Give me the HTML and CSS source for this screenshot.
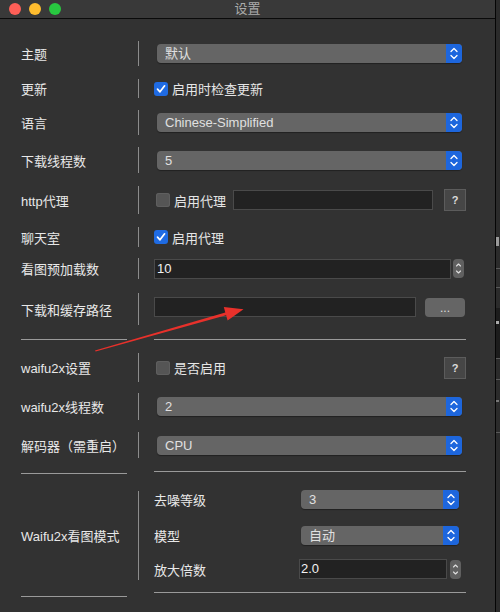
FILE: index.html
```html
<!DOCTYPE html>
<html lang="zh-CN">
<head>
<meta charset="utf-8">
<title>设置</title>
<link rel="stylesheet" href="styles.css">
</head>
<body>
<div class="desktop">
  <div class="window">
    <div class="titlebar">
      <div class="lights">
        <span class="light red"></span>
        <span class="light yellow"></span>
        <span class="light green"></span>
      </div>
      <div class="title">设置</div>
      <div></div>
    </div>

    <div class="content">
      <div class="row r1">
        <div class="label">主题</div><div class="vline"></div>
        <div class="field"><div class="combo"><span class="ctext">默认</span><span class="cbtn"><svg viewBox="0 0 16 19"><path d="M5 7.5 8 4.5 11 7.5M5 11.5 8 14.5 11 11.5"/></svg></span></div></div>
      </div>
      <div class="row r2">
        <div class="label">更新</div><div class="vline"></div>
        <div class="field"><label class="check"><span class="box on"><svg viewBox="0 0 14 14"><path d="M3.5 7.2 6 9.8 10.6 3.8"/></svg></span>启用时检查更新</label></div>
      </div>
      <div class="row r3">
        <div class="label">语言</div><div class="vline"></div>
        <div class="field"><div class="combo"><span class="ctext">Chinese-Simplified</span><span class="cbtn"><svg viewBox="0 0 16 19"><path d="M5 7.5 8 4.5 11 7.5M5 11.5 8 14.5 11 11.5"/></svg></span></div></div>
      </div>
      <div class="row r4">
        <div class="label">下载线程数</div><div class="vline"></div>
        <div class="field"><div class="combo"><span class="ctext">5</span><span class="cbtn"><svg viewBox="0 0 16 19"><path d="M5 7.5 8 4.5 11 7.5M5 11.5 8 14.5 11 11.5"/></svg></span></div></div>
      </div>
      <div class="row r5">
        <div class="label">http代理</div><div class="vline"></div>
        <div class="field">
          <label class="check off-pad"><span class="box"></span>启用代理</label>
          <div class="edit proxy"></div>
          <div class="qbtn">?</div>
        </div>
      </div>
      <div class="row r6">
        <div class="label">聊天室</div><div class="vline"></div>
        <div class="field"><label class="check"><span class="box on"><svg viewBox="0 0 14 14"><path d="M3.5 7.2 6 9.8 10.6 3.8"/></svg></span>启用代理</label></div>
      </div>
      <div class="row r7">
        <div class="label">看图预加载数</div><div class="vline"></div>
        <div class="field">
          <div class="edit spin">10</div>
          <div class="stepper"><svg viewBox="0 0 11 19"><path d="M3.5 7 5.5 5 7.5 7M3.5 12 5.5 14 7.5 12"/></svg></div>
        </div>
      </div>
      <div class="row r8">
        <div class="label">下载和缓存路径</div><div class="vline"></div>
        <div class="field raise">
          <div class="edit path"></div>
          <div class="dots">...</div>
        </div>
      </div>

      <div class="sep s1"><div class="hline"></div><div class="hline"></div></div>

      <div class="row r9">
        <div class="label">waifu2x设置</div><div class="vline"></div>
        <div class="field">
          <label class="check off-pad"><span class="box"></span>是否启用</label>
          <div class="qbtn push">?</div>
        </div>
      </div>
      <div class="row r10">
        <div class="label">waifu2x线程数</div><div class="vline"></div>
        <div class="field"><div class="combo"><span class="ctext">2</span><span class="cbtn"><svg viewBox="0 0 16 19"><path d="M5 7.5 8 4.5 11 7.5M5 11.5 8 14.5 11 11.5"/></svg></span></div></div>
      </div>
      <div class="row r11">
        <div class="label">解码器（需重启）</div><div class="vline"></div>
        <div class="field"><div class="combo"><span class="ctext">CPU</span><span class="cbtn"><svg viewBox="0 0 16 19"><path d="M5 7.5 8 4.5 11 7.5M5 11.5 8 14.5 11 11.5"/></svg></span></div></div>
      </div>

      <div class="sep s2"><div class="hline low"></div><div class="hline"></div></div>

      <div class="row group">
        <div class="label">Waifu2x看图模式</div><div class="vline"></div>
        <div class="subform">
          <div class="subrow">
            <div class="sublabel">去噪等级</div>
            <div class="combo sub"><span class="ctext">3</span><span class="cbtn"><svg viewBox="0 0 16 19"><path d="M5 7.5 8 4.5 11 7.5M5 11.5 8 14.5 11 11.5"/></svg></span></div>
          </div>
          <div class="subrow gap2">
            <div class="sublabel">模型</div>
            <div class="combo sub"><span class="ctext">自动</span><span class="cbtn"><svg viewBox="0 0 16 19"><path d="M5 7.5 8 4.5 11 7.5M5 11.5 8 14.5 11 11.5"/></svg></span></div>
          </div>
          <div class="subrow gap3">
            <div class="sublabel">放大倍数</div>
            <div class="subspin">
              <div class="edit spin scale">2.0</div>
              <div class="stepper"><svg viewBox="0 0 11 19"><path d="M3.5 7 5.5 5 7.5 7M3.5 12 5.5 14 7.5 12"/></svg></div>
            </div>
          </div>
        </div>
      </div>

      <div class="sep s3"><div class="hline low4"></div><div class="hline"></div></div>
    </div>
  </div>

  <div class="behind">
    <div class="mark m1"></div>
    <div class="tick t1"></div>
    <div class="tick t2"></div>
    <div class="darkband"><div class="dot"></div></div>
    <div class="tick t3"></div>
    <div class="tick t4"></div>
    <div class="mark m2"></div>
    <div class="tick t5"></div>
  </div>

  <svg class="arrow" viewBox="0 0 500 612" width="500" height="612">
    <polygon points="95,350.6 225.3,312.4 223.8,307.1 243.5,309.2 227.6,320.5 226.1,315.2 95.6,351.6" fill="#e8312b"/>
  </svg>
</div>
</body>
</html>
```

FILE: styles.css
```css
* { box-sizing: border-box; margin: 0; padding: 0; }

html, body {
  width: 500px;
  height: 612px;
  overflow: hidden;
  background: #2a2a2a;
}

body {
  font-family: "Liberation Sans", "Noto Sans CJK SC", sans-serif;
  font-size: 13px;
  color: #e6e6e6;
}

.desktop {
  position: relative;
  display: flex;
  width: 500px;
  height: 612px;
}

.window {
  width: 496px;
  height: 612px;
  flex: none;
  background: #323232;
  border-right: 1px solid #050505;
  display: flex;
  flex-direction: column;
}

/* title bar */
.titlebar {
  height: 19px;
  flex: none;
  background: #393939;
  border-bottom: 1px solid #0a0a0a;
  display: grid;
  grid-template-columns: 1fr auto 1fr;
  align-items: center;
}

.lights {
  display: flex;
  gap: 8px;
  padding-left: 9px;
}

.light {
  width: 12px;
  height: 12px;
  border-radius: 50%;
}
.red { background: #fe5f57; }
.yellow { background: #febc2e; }
.green { background: #28c840; }

.title {
  color: #ababab;
  font-size: 13px;
  line-height: 18px;
}

/* form */
.content {
  padding: 22px 29px 0 21px;
  display: flex;
  flex-direction: column;
}

.row {
  display: grid;
  grid-template-columns: 117px 1px 1fr;
  align-items: center;
}

.label {
  white-space: nowrap;
  color: #e8e8e8;
}

.vline {
  align-self: stretch;
  background: #8c8c8c;
}

.field {
  padding-left: 15px;
  display: flex;
  align-items: center;
  min-width: 0;
}

.r1 { height: 25px; }
.r2 { height: 18px; margin-top: 13px; }
.r3 { height: 25px; margin-top: 13px; }
.r4 { height: 26px; margin-top: 12px; }
.r5 { height: 28px; margin-top: 13px; }
.r6 { height: 20px; margin-top: 13px; }
.r7 { height: 21px; margin-top: 11px; }
.r8 { height: 32px; margin-top: 14px; }
.r9 { height: 29px; margin-top: 13px; }
.r10 { height: 27px; margin-top: 11px; }
.r11 { height: 26px; margin-top: 12px; }
.group { height: 89px; margin-top: 17px; }

.raise { margin-bottom: 4px; }

/* separators */
.sep {
  display: grid;
  grid-template-columns: 106px 1fr;
  column-gap: 27px;
  align-items: start;
}
.s1 { margin-top: 14px; }
.s2 { margin-top: 13px; }
.s3 { margin-top: 12px; }

.hline {
  height: 1px;
  background: #9a9a9a;
}
.hline.low { margin-top: 2px; }
.hline.low4 { margin-top: 4px; }

/* combo box */
.combo {
  flex: 1;
  display: flex;
  height: 19px;
  margin: 0 4px 0 3px;
  border-radius: 4px;
  background: #656565;
  box-shadow: 0 1px 1px rgba(0, 0, 0, 0.35);
  overflow: hidden;
}

.ctext {
  flex: 1;
  padding-left: 8px;
  line-height: 19px;
  color: #e0e0e0;
  white-space: nowrap;
}

.cbtn {
  width: 16px;
  flex: none;
  background: #1d66dd;
  display: flex;
}

.cbtn svg {
  width: 16px;
  height: 19px;
}

.cbtn path {
  fill: none;
  stroke: #ffffff;
  stroke-width: 1.3;
  stroke-linecap: round;
  stroke-linejoin: round;
}

/* checkbox */
.check {
  display: flex;
  align-items: center;
  gap: 4px;
  color: #e6e6e6;
  white-space: nowrap;
}

.check.off-pad { margin-left: 2px; }

.box {
  width: 14px;
  height: 14px;
  border-radius: 3px;
  background: #555555;
  box-shadow: inset 0 0 0 1px #5f5f5f;
  display: flex;
}

.box.on {
  background: #1f6be3;
  box-shadow: none;
}

.box svg { width: 14px; height: 14px; }
.box path {
  fill: none;
  stroke: #fff;
  stroke-width: 1.7;
  stroke-linecap: round;
  stroke-linejoin: round;
}

/* line edits */
.edit {
  height: 20px;
  background: #222222;
  border: 1px solid #4a4a4a;
  color: #f2f2f2;
  line-height: 18px;
  padding-left: 2px;
}

.proxy {
  width: 200px;
  margin-left: auto;
}

.spin {
  flex: 1;
  height: 20px;
}

.path {
  flex: 1;
}

.qbtn {
  width: 22px;
  height: 22px;
  margin-left: 11px;
  flex: none;
  background: #464646;
  border: 1px solid #5c5c5c;
  color: #dcdcdc;
  font-size: 11px;
  font-weight: bold;
  display: flex;
  align-items: center;
  justify-content: center;
}

.qbtn.push { margin-left: auto; }

.stepper {
  width: 11px;
  height: 19px;
  flex: none;
  margin: 0 2px 0 2px;
  border-radius: 4px;
  background: #606060;
  display: flex;
}

.stepper svg { width: 11px; height: 19px; }
.stepper path {
  fill: none;
  stroke: #e0e0e0;
  stroke-width: 1.1;
  stroke-linecap: round;
  stroke-linejoin: round;
}

.dots {
  width: 40px;
  height: 19px;
  flex: none;
  margin: 0 1px 0 9px;
  border-radius: 4px;
  background: #656565;
  color: #dddddd;
  text-align: center;
  line-height: 20px;
  font-size: 12px;
}

/* nested waifu2x group */
.subform {
  align-self: stretch;
  padding-left: 15px;
  margin-top: -1px;
  display: flex;
  flex-direction: column;
}

.subrow {
  display: grid;
  grid-template-columns: 145px 1fr;
  align-items: center;
  height: 19px;
}

.subrow.gap2 { margin-top: 17px; }
.subrow.gap3 { margin-top: 14px; }

.sublabel {
  color: #e8e8e8;
  white-space: nowrap;
}

.combo.sub {
  margin: 0 7px 0 2px;
}

.subspin {
  display: flex;
  align-items: center;
}

.subspin .stepper {
  margin: 0 5px 0 3px;
}

.scale {
  padding-left: 1px;
}

/* the window behind */
.behind {
  flex: 1;
  background: #2b2b2b;
  display: flex;
  flex-direction: column;
}

.mark {
  height: 9px;
  width: 3px;
  background: #9a9a9a;
}
.m1 { margin-top: 237px; }
.m2 { margin-top: 20px; height: 2px; background: #777; }

.tick {
  height: 1px;
  background: #595959;
}
.t1 { margin-top: 22px; }
.t2 { margin-top: 18px; }
.t3 { margin-top: 0; }
.t4 { margin-top: 20px; }
.t5 { margin-top: 30px; }

.darkband {
  height: 50px;
  margin-top: 20px;
  background: #1c1c1c;
  padding-top: 13px;
}
.dot {
  width: 3px;
  height: 3px;
  background: #aaaaaa;
}

/* annotation arrow over the form */
.arrow {
  position: absolute;
  left: 0;
  top: 0;
  pointer-events: none;
}
```
